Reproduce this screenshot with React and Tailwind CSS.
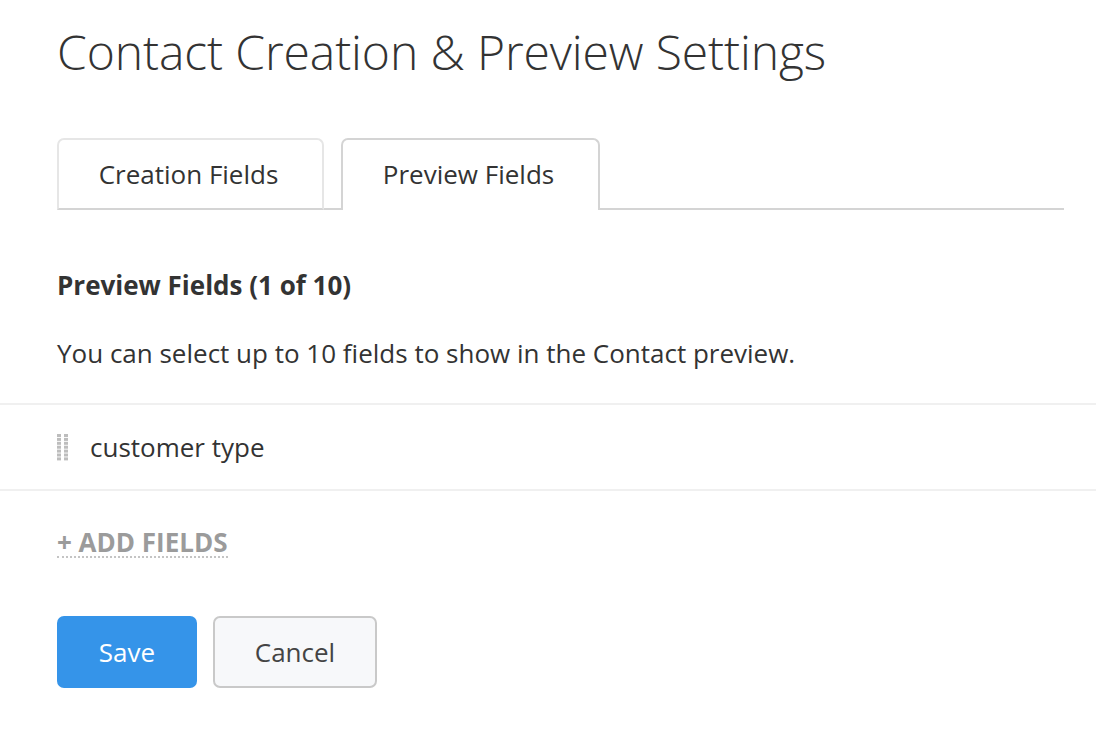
import React from 'react';

const DragHandle = () => (
  <svg width="12" height="27" viewBox="0 0 12 27" className="shrink-0">
    {[0, 1, 2, 3, 4, 5, 6].map((r) =>
      [0, 1].map((c) => (
        <rect key={`${r}-${c}`} x={c * 7} y={r * 3.9} width="4" height="3" fill="#bdbdbd" />
      ))
    )}
  </svg>
);

const App = () => {
  return (
    <div className="min-h-screen w-[1096px] bg-white text-[#333] font-['Open_Sans',sans-serif]">
      <div className="pl-[57px] pr-[32px]">
        <h1 className="pt-[20px] text-[48px] font-light leading-[64px] tracking-[-0.1px]">
          Contact Creation &amp; Preview Settings
        </h1>

        <div className="mt-[54px] flex items-end border-b-2 border-[#d4d4d4]">
          <div className="-mb-[2px] flex h-[72px] w-[267px] items-center justify-center rounded-t-[7px] border-2 border-[#e6e6e6] border-b-[#d4d4d4] pr-[4px] text-[26px]">
            Creation Fields
          </div>
          <div className="-mb-[2px] ml-[17px] flex h-[72px] w-[259px] items-center justify-center rounded-t-[7px] border-2 border-b-0 border-[#d4d4d4] bg-white pb-[2px] pr-[4px] text-[26px]">
            Preview Fields
          </div>
        </div>

        <h2 className="mt-[57px] text-[26px] font-bold leading-[36px]">Preview Fields (1 of 10)</h2>
        <p className="mt-[32px] text-[26px] leading-[36px]">
          You can select up to 10 fields to show in the Contact preview.
        </p>
      </div>

      <div className="mt-[32px] flex h-[88px] items-center gap-[21px] border-y-2 border-[#f0f0f0] pl-[57px]">
        <DragHandle />
        <span className="text-[26px]">customer type</span>
      </div>

      <div className="pl-[57px]">
        <div className="mt-[37px] inline-block border-b-2 border-dotted border-[#c4c4c4] text-[26px] font-bold uppercase leading-[28px] text-[#9b9b9b]">
          + Add Fields
        </div>

        <div className="mt-[58px] flex gap-[16px]">
          <button className="h-[72px] w-[140px] rounded-[7px] bg-[#3594e9] text-[26px] text-white">Save</button>
          <button className="h-[72px] w-[164px] rounded-[7px] border-2 border-[#c9c9c9] bg-[#f7f8fa] text-[26px] text-[#444]">
            Cancel
          </button>
        </div>
      </div>
    </div>
  );
};

export default App;
